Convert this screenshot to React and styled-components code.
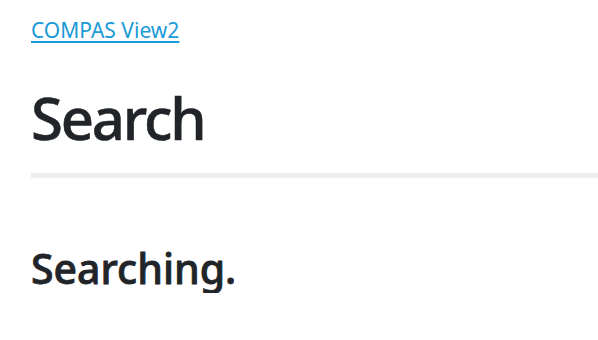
import React from "react";
import styled, { createGlobalStyle } from "styled-components";

const Global = createGlobalStyle`
  html, body {
    margin: 0;
    padding: 0;
    background: #fff;
  }
  body {
    font-family: "Noto Sans", "Open Sans", sans-serif;
    color: #212529;
  }
`;

const Page = styled.div`
  padding: 14px 0 0 31px;
`;

const TopLink = styled.a`
  display: inline-block;
  font-size: 21px;
  line-height: 32px;
  color: #1a9ad6;
  text-decoration: underline;
  text-underline-offset: 3px;
`;

const Title = styled.h1`
  margin: 40px 0 0;
  font-size: 58px;
  font-weight: 500;
  line-height: 1.1;
  letter-spacing: -2.2px;
  -webkit-text-stroke: 0.5px currentColor;
`;

const Rule = styled.hr`
  margin: 23px 0 0;
  border: 0;
  height: 5px;
  background: #eeeeee;
`;

const Status = styled.h2`
  margin: 66px 0 0;
  font-size: 41px;
  font-weight: 500;
  line-height: 1.2;
  letter-spacing: 0;
  -webkit-text-stroke: 0.8px currentColor;
`;

export default function App() {
  return (
    <>
      <Global />
      <Page>
        <TopLink href="#">COMPAS View2</TopLink>
        <Title>Search</Title>
        <Rule />
        <Status>Searching.</Status>
      </Page>
    </>
  );
}
